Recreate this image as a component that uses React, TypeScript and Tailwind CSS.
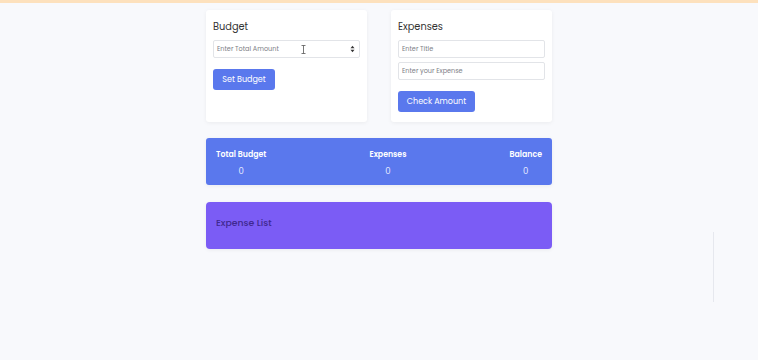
import React from 'react';

const font = { fontFamily: '"Poppins", "Noto Sans", "DejaVu Sans", sans-serif' };

function Card({ title, children }: { title: string; children: React.ReactNode }) {
  return (
    <div className="w-[161px] h-[112px] bg-white rounded-[3px] shadow-[0_1px_4px_rgba(0,0,0,0.06)] px-[7px] pt-[10px]">
      <h2 className="text-[9.8px] leading-[14px] text-[#333] mb-[6px]">{title}</h2>
      {children}
    </div>
  );
}

function Field({ placeholder, spinner }: { placeholder: string; spinner?: boolean }) {
  return (
    <div className="h-[18px] w-[147px] border border-[#e2e4e8] rounded-[2px] flex items-center justify-between pl-[3px] pr-[4px]">
      <span className="text-[6.5px] text-[#7d8086]">{placeholder}</span>
      {spinner && (
        <svg width="5" height="8" viewBox="0 0 5 8">
          <path d="M0.5 3.2 L2.5 0.8 L4.5 3.2 Z" fill="#333" />
          <path d="M0.5 4.8 L2.5 7.2 L4.5 4.8 Z" fill="#333" />
        </svg>
      )}
    </div>
  );
}

function Stat({ label }: { label: string }) {
  return (
    <div className="flex flex-col items-center">
      <span className="text-[7.8px] font-semibold text-white leading-[10px]">{label}</span>
      <span className="text-[8.5px] text-[#e8ecff] mt-[6px] leading-[11px]">0</span>
    </div>
  );
}

export default function App() {
  return (
    <div className="min-h-[360px] bg-[#f8f9fc] relative" style={font}>
      <div className="h-[3px] bg-[#fde1bd]" />
      <div className="w-[346px] mx-auto pt-[7px]">
        <div className="flex justify-between">
          <Card title="Budget">
            <div className="relative">
              <Field placeholder="Enter Total Amount" spinner />
              <svg className="absolute left-[88px] top-[5px]" width="5" height="9" viewBox="0 0 5 9">
                <path d="M0.5 0.5 H4.5 M2.5 0.5 V8.5 M0.5 8.5 H4.5" stroke="#555" strokeWidth="0.8" fill="none" />
              </svg>
            </div>
            <button className="mt-[11px] h-[21px] w-[62px] bg-[#5a78ed] rounded-[3px] text-white text-[8px]">
              Set Budget
            </button>
          </Card>
          <Card title="Expenses">
            <div className="flex flex-col gap-[4px]">
              <Field placeholder="Enter Title" />
              <Field placeholder="Enter your Expense" />
            </div>
            <button className="mt-[11px] h-[21px] w-[77px] bg-[#5a78ed] rounded-[3px] text-white text-[8px]">
              Check Amount
            </button>
          </Card>
        </div>

        <div className="mt-[16px] h-[47px] bg-[#5a78ed] rounded-[3px] flex justify-between items-start px-[10px] pt-[12px] shadow-[0_1px_4px_rgba(0,0,0,0.06)]">
          <Stat label="Total Budget" />
          <Stat label="Expenses" />
          <Stat label="Balance" />
        </div>

        <div className="mt-[17px] h-[47px] bg-[#7b5cf5] rounded-[4px] flex items-start pt-[15px] px-[10px] shadow-[0_1px_4px_rgba(0,0,0,0.06)]">
          <span className="text-[9.3px] leading-[12px] font-medium text-[#3f2890]">Expense List</span>
        </div>
      </div>
      <div className="absolute left-[713px] top-[232px] w-px h-[70px] bg-[#e6e8ee]" />
    </div>
  );
}
